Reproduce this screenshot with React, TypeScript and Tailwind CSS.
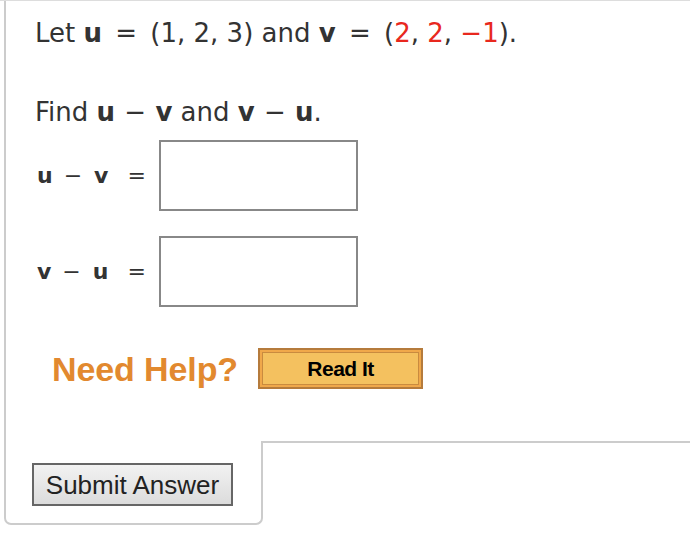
export default function App() {
  const text = "text-[#333]";
  const arial = { fontFamily: '"Liberation Sans", Arial, sans-serif' };
  return (
    <div className="w-[690px] h-[546px] bg-white overflow-hidden" style={{ fontFamily: '"DejaVu Sans", Verdana, sans-serif' }}>
      <div className="border-t border-[#ddd]">
        <div className="ml-[4px] h-[442px] border-l-2 border-b-2 border-[#ccc] pl-[29px]">
          <p className={`${text} text-[26px] leading-[30px] pt-[17px] whitespace-nowrap`}>
            Let <b>u</b> <span className="mx-[5px]">=</span> (1, 2, 3) and <b>v</b> <span className="mx-[5px]">=</span> (
            <span className="text-[#e8281e]">2</span>, <span className="text-[#e8281e]">2</span>,{' '}
            <span className="text-[#e8281e]">−1</span>).
          </p>
          <p className={`${text} text-[26px] leading-[30px] mt-[49px] whitespace-nowrap`}>
            Find <b>u</b> <span className="mx-[1px]">−</span> <b>v</b> and <b>v</b> <span className="mx-[1px]">−</span> <b>u</b>.
          </p>

          <div className="mt-[13px] flex flex-col gap-[25px]">
            <div className="flex items-center">
              <span className={`${text} text-[22px] w-[124px] pl-[2px] flex items-center`}>
                <b>u</b>
                <span className="ml-[11px]">−</span>
                <b className="ml-[12px]">v</b>
                <span className="ml-[19px]">=</span>
              </span>
              <div className="w-[199px] h-[71px] border-2 border-[#888]" />
            </div>
            <div className="flex items-center">
              <span className={`${text} text-[22px] w-[124px] pl-[2px] flex items-center`}>
                <b>v</b>
                <span className="ml-[11px]">−</span>
                <b className="ml-[12px]">u</b>
                <span className="ml-[19px]">=</span>
              </span>
              <div className="w-[199px] h-[71px] border-2 border-[#888]" />
            </div>
          </div>

          <div className="mt-[41px] flex items-center pl-[17px]">
            <span className="text-[#e2892f] text-[34px] font-bold leading-none tracking-[-0.1px]" style={arial}>
              Need Help?
            </span>
            <div className="ml-[20px] w-[165px] h-[41px] border-2 border-[#b57b3c] bg-[#f0a84a] p-[2px]">
              <div
                className="w-full h-full border border-[#c98b3f] bg-[#f4c15f] flex items-center justify-center text-black text-[21px] font-bold tracking-[-0.5px]"
                style={arial}
              >
                Read It
              </div>
            </div>
          </div>
        </div>

        <div className="ml-[4px] -mt-[2px] w-[259px] h-[84px] bg-white border-l-2 border-r-2 border-b-2 border-[#ccc] rounded-b-[7px] pl-[26px] pt-[22px]">
          <button
            className="w-[201px] h-[43px] border-2 border-[#666] bg-gradient-to-b from-[#f2f2f2] to-[#dcdcdc] text-[#222] text-[26px] leading-none"
            style={arial}
          >
            Submit Answer
          </button>
        </div>
      </div>
    </div>
  );
}
